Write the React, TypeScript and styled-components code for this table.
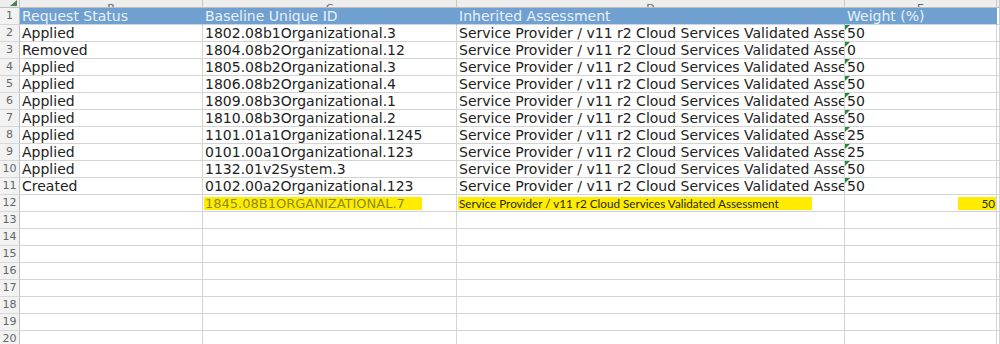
import styled, { createGlobalStyle } from "styled-components";

const GlobalStyle = createGlobalStyle`
  html, body {
    margin: 0;
    padding: 0;
    background: #ffffff;
    overflow: hidden;
  }
`;

const COLUMNS = "20px 183px 254px 388px 152px 1fr";

const rows = [
  ["Applied", "1802.08b1Organizational.3", "50"],
  ["Removed", "1804.08b2Organizational.12", "0"],
  ["Applied", "1805.08b2Organizational.3", "50"],
  ["Applied", "1806.08b2Organizational.4", "50"],
  ["Applied", "1809.08b3Organizational.1", "50"],
  ["Applied", "1810.08b3Organizational.2", "50"],
  ["Applied", "1101.01a1Organizational.1245", "25"],
  ["Applied", "0101.00a1Organizational.123", "25"],
  ["Applied", "1132.01v2System.3", "50"],
  ["Created", "0102.00a2Organizational.123", "50"],
];

const assessment = "Service Provider / v11 r2 Cloud Services Validated Asse";

function App() {
  return (
    <>
      <GlobalStyle />
      <Sheet>
        <ColumnHeader>
          <Corner>
            <SelectAll />
          </Corner>
          {["B", "C", "D", "E"].map((letter) => (
            <ColumnLetter key={letter}>
              <span>{letter}</span>
            </ColumnLetter>
          ))}
          <ColumnLetter />
        </ColumnHeader>

        <Row>
          <RowNumber>1</RowNumber>
          <HeadCell>Request Status</HeadCell>
          <HeadCell>Baseline Unique ID</HeadCell>
          <HeadCell>Inherited Assessment</HeadCell>
          <HeadCell>Weight (%)</HeadCell>
          <HeadCell $last />
        </Row>

        {rows.map(([status, id, weight], index) => (
          <Row key={index}>
            <RowNumber>{index + 2}</RowNumber>
            <Cell>{status}</Cell>
            <Cell>{id}</Cell>
            <Cell>{assessment}</Cell>
            <Cell>
              <ErrorFlag />
              {weight}
            </Cell>
            <Cell />
          </Row>
        ))}

        <Row>
          <RowNumber>12</RowNumber>
          <Cell />
          <Cell>
            <Highlight $width={218} $tone="id">
              1845.08B1ORGANIZATIONAL.7
            </Highlight>
          </Cell>
          <Cell>
            <Highlight $width={354} $tone="small">
              Service Provider / v11 r2 Cloud Services Validated Assessment
            </Highlight>
          </Cell>
          <Cell $right>
            <Highlight $width={38} $tone="small" $right>
              50
            </Highlight>
          </Cell>
          <Cell />
        </Row>

        {Array.from({ length: 8 }, (_, i) => (
          <Row key={`empty-${i}`}>
            <RowNumber>{i + 13}</RowNumber>
            <Cell />
            <Cell />
            <Cell />
            <Cell />
            <Cell />
          </Row>
        ))}
      </Sheet>
    </>
  );
}
export default App;

const Sheet = styled.div`
  width: 1000px;
  height: 344px;
  overflow: hidden;
  font-family: "DejaVu Sans", Verdana, sans-serif;
`;

const ColumnHeader = styled.div`
  display: grid;
  grid-template-columns: ${COLUMNS};
  height: 8px;
  box-sizing: border-box;
  background: #eeeeee;
  border-bottom: 1px solid #bfbfbf;
`;

const Corner = styled.div`
  position: relative;
  border-right: 1px solid #c8c8c8;
`;

const SelectAll = styled.div`
  position: absolute;
  right: 2px;
  bottom: 1px;
  width: 0;
  height: 0;
  border-left: 7px solid transparent;
  border-bottom: 6px solid #4c7d57;
`;

const ColumnLetter = styled.div`
  display: flex;
  justify-content: center;
  align-items: flex-end;
  overflow: hidden;
  border-right: 1px solid #c8c8c8;
  font-size: 11px;
  line-height: 11px;
  color: #666666;

  span {
    margin-bottom: -7px;
  }
`;

const Row = styled.div`
  display: grid;
  grid-template-columns: ${COLUMNS};
  height: 17px;
`;

const RowNumber = styled.div`
  box-sizing: border-box;
  background: #f2f2f2;
  border-right: 1px solid #c0c0c0;
  border-bottom: 1px solid #d8d8d8;
  font-size: 11px;
  line-height: 16px;
  color: #666666;
  text-align: center;
`;

const Cell = styled.div<{ $right?: boolean }>`
  position: relative;
  box-sizing: border-box;
  display: flex;
  align-items: center;
  justify-content: ${(p) => (p.$right ? "flex-end" : "flex-start")};
  padding-left: 2px;
  border-right: 1px solid #d4d4d4;
  border-bottom: 1px solid #d4d4d4;
  font-size: 14px;
  line-height: 16px;
  color: #222222;
  white-space: nowrap;
  overflow: hidden;
`;

const HeadCell = styled(Cell)<{ $last?: boolean }>`
  background: ${(p) => (p.$last ? "#ffffff" : "#70a0d0")};
  color: #e9f1f9;
  border-right-color: ${(p) => (p.$last ? "#c8c8c8" : "#70a0d0")};
  border-bottom-color: #c7d7e8;
`;

const ErrorFlag = styled.span`
  position: absolute;
  left: 0;
  top: 0;
  width: 0;
  height: 0;
  border-top: 5px solid #1f8a3a;
  border-right: 5px solid transparent;
`;

const Highlight = styled.span<{
  $width: number;
  $tone: "id" | "small";
  $right?: boolean;
}>`
  display: inline-block;
  box-sizing: border-box;
  width: ${(p) => p.$width}px;
  height: 13px;
  margin-left: -1px;
  padding: ${(p) => (p.$right ? "0 1px 0 0" : "0 0 0 1px")};
  background: #ffec00;
  text-align: ${(p) => (p.$right ? "right" : "left")};
  font-family: ${(p) =>
    p.$tone === "id"
      ? `"DejaVu Sans", Verdana, sans-serif`
      : `Lato, "Open Sans", sans-serif`};
  font-size: ${(p) => (p.$tone === "id" ? "13px" : "11.7px")};
  line-height: 13px;
  color: ${(p) => (p.$tone === "id" ? "#8c8c1c" : "#2a2a10")};
  white-space: nowrap;
  overflow: hidden;
`;
